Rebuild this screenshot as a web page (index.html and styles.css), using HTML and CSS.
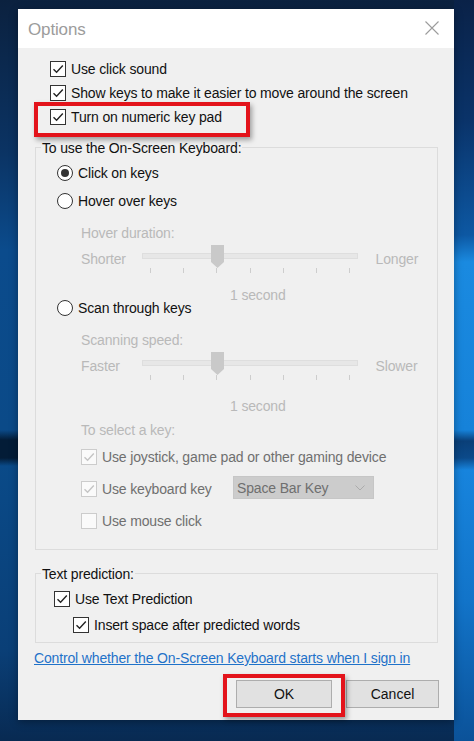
FILE: index.html
```html
<!DOCTYPE html>
<html lang="en">
<head>
    <meta charset="UTF-8">
    <meta name="viewport" content="width=device-width, initial-scale=1.0">
    <title>Options</title>
    <link rel="stylesheet" href="styles.css">
</head>
<body>

    <div class="dialog">
        <div class="titlebar">
            <span class="title">Options</span>
            <svg class="close" width="14" height="14" viewBox="0 0 14 14"><path d="M0.5 0.5L13.5 13.5M13.5 0.5L0.5 13.5" stroke="#9c9c9c" stroke-width="1.1" fill="none"/></svg>
        </div>

        <!-- General options -->
        <div class="general">
            <div class="check-row">
                <span class="box"><svg width="14" height="14" viewBox="0 0 14 14"><path d="M2.5 7.2L5.6 10.3L11.8 3.6" stroke="#222" stroke-width="1.4" fill="none"/></svg></span>
                Use click sound
            </div>
            <div class="check-row">
                <span class="box"><svg width="14" height="14" viewBox="0 0 14 14"><path d="M2.5 7.2L5.6 10.3L11.8 3.6" stroke="#222" stroke-width="1.4" fill="none"/></svg></span>
                Show keys to make it easier to move around the screen
            </div>
            <div class="check-row highlighted">
                <span class="box"><svg width="14" height="14" viewBox="0 0 14 14"><path d="M2.5 7.2L5.6 10.3L11.8 3.6" stroke="#222" stroke-width="1.4" fill="none"/></svg></span>
                Turn on numeric key pad
            </div>
        </div>

        <!-- On-Screen Keyboard mode -->
        <div class="group keyboard-group">
            <div class="group-title">To use the On-Screen Keyboard:</div>
            <div class="radio-row"><span class="radio on"></span>Click on keys</div>
            <div class="radio-row"><span class="radio"></span>Hover over keys</div>
            <div class="sub">
                <div class="sub-label">Hover duration:</div>
                <div class="slider-row">
                    <span class="slider-end">Shorter</span>
                    <div class="slider">
                        <div class="track"></div>
                        <svg class="thumb" width="13" height="23" viewBox="0 0 13 23"><polygon points="0,0 13,0 13,17 6.5,23 0,17" fill="#c9c9c9"/></svg>
                        <div class="ticks"><i></i><i></i><i></i><i></i><i></i><i></i><i></i></div>
                    </div>
                    <span class="slider-end right">Longer</span>
                </div>
                <div class="value">1 second</div>
            </div>
            <div class="radio-row"><span class="radio"></span>Scan through keys</div>
            <div class="sub">
                <div class="sub-label">Scanning speed:</div>
                <div class="slider-row">
                    <span class="slider-end">Faster</span>
                    <div class="slider">
                        <div class="track"></div>
                        <svg class="thumb" width="13" height="23" viewBox="0 0 13 23"><polygon points="0,0 13,0 13,17 6.5,23 0,17" fill="#c9c9c9"/></svg>
                        <div class="ticks"><i></i><i></i><i></i><i></i><i></i><i></i><i></i></div>
                    </div>
                    <span class="slider-end right">Slower</span>
                </div>
                <div class="value low">1 second</div>
                <div class="select-label">To select a key:</div>
                <div class="check-row disabled">
                    <span class="box"><svg width="14" height="14" viewBox="0 0 14 14"><path d="M2.5 7.2L5.6 10.3L11.8 3.6" stroke="#c4c4c4" stroke-width="1.4" fill="none"/></svg></span>
                    Use joystick, game pad or other gaming device
                </div>
                <div class="check-row disabled">
                    <span class="box"><svg width="14" height="14" viewBox="0 0 14 14"><path d="M2.5 7.2L5.6 10.3L11.8 3.6" stroke="#c4c4c4" stroke-width="1.4" fill="none"/></svg></span>
                    <span class="key-label">Use keyboard key</span>
                    <div class="dropdown">
                        Space Bar Key
                        <svg width="10" height="6" viewBox="0 0 10 6"><path d="M0.5 0.5L5 5L9.5 0.5" stroke="#ababab" fill="none"/></svg>
                    </div>
                </div>
                <div class="check-row disabled">
                    <span class="box"></span>
                    Use mouse click
                </div>
            </div>
        </div>

        <!-- Text prediction -->
        <div class="group prediction-group">
            <div class="group-title">Text prediction:</div>
            <div class="check-row pred">
                <span class="box"><svg width="14" height="14" viewBox="0 0 14 14"><path d="M2.5 7.2L5.6 10.3L11.8 3.6" stroke="#222" stroke-width="1.4" fill="none"/></svg></span>
                Use Text Prediction
            </div>
            <div class="check-row pred nested">
                <span class="box"><svg width="14" height="14" viewBox="0 0 14 14"><path d="M2.5 7.2L5.6 10.3L11.8 3.6" stroke="#222" stroke-width="1.4" fill="none"/></svg></span>
                Insert space after predicted words
            </div>
        </div>

        <a class="signin-link" href="#">Control whether the On-Screen Keyboard starts when I sign in</a>

        <div class="buttons">
            <div class="ok-wrap">
                <button class="btn ok">OK</button>
            </div>
            <button class="btn cancel">Cancel</button>
        </div>
    </div>

</body>
</html>
```

FILE: styles.css
```css
body {
    margin: 0;
    padding: 9px 0 0 18px;
    height: 741px;
    box-sizing: border-box;
    overflow: hidden;
    font-family: "Liberation Sans", Arial, sans-serif;
    font-size: 14px;
    letter-spacing: -0.15px;
    color: #111;
    background:
        linear-gradient(180deg, #0a2248 0px, #0a3369 120px, #0d58a3 235px, #1a8ae0 262px, #1682d9 430px, #0a3f78 441px, #0b4a8a 458px, #1784dd 470px, #1274c9 600px, #0b5299 741px) right top / 20px 100% no-repeat,
        linear-gradient(180deg, #0b213f 0px, #0b3363 150px, #0b4b8c 250px, #0b4a88 430px, #031c37 440px, #031c37 458px, #0a4a88 466px, #0a3f77 650px, #082a52 741px) left top / 100% 100% no-repeat;
}

.dialog {
    width: 436px;
    height: 711px;
    box-sizing: border-box;
    background-color: #f0f0f0;
    box-shadow: 0 2px 8px rgba(0, 0, 0, 0.35);
}

/* Title bar */
.titlebar {
    height: 39px;
    background-color: #fff;
    display: flex;
    align-items: center;
    justify-content: space-between;
    padding: 0 15px 0 10px;
}
.title {
    font-size: 17px;
    color: #9c9c9c;
    margin-top: 2px;
}
.close {
    margin-top: -2px;
}

/* Checkboxes */
.check-row {
    display: flex;
    align-items: center;
    height: 24px;
    white-space: nowrap;
}
.box {
    width: 16px;
    height: 16px;
    box-sizing: border-box;
    border: 1px solid #333;
    background-color: #fff;
    margin-right: 5px;
    display: flex;
    align-items: center;
    justify-content: center;
    flex-shrink: 0;
}

.general {
    padding: 9px 0 0 32px;
}
.highlighted {
    position: relative;
}
.highlighted::after {
    content: "";
    position: absolute;
    left: -16px;
    top: -3px;
    width: 216px;
    height: 35px;
    box-sizing: border-box;
    border: 4px solid #e3131b;
    box-shadow: 2px 3px 5px rgba(0, 0, 0, 0.35);
}

/* Group boxes */
.group {
    border: 1px solid #dcdcdc;
    margin: 0 16px 0 17px;
}
.group-title {
    margin-top: -9px;
    height: 18px;
    line-height: 18px;
    width: fit-content;
    padding: 0 1px;
    background-color: #f0f0f0;
}

.keyboard-group {
    margin-top: 18px;
    padding: 0 0 12px 21px;
}
.keyboard-group .group-title {
    margin-left: -16px;
    margin-bottom: 2px;
}

/* Radio buttons */
.radio-row {
    display: flex;
    align-items: center;
    height: 28px;
}
.radio {
    width: 16px;
    height: 16px;
    box-sizing: border-box;
    border: 1px solid #333;
    border-radius: 50%;
    background-color: #fff;
    margin-right: 5px;
    display: flex;
    align-items: center;
    justify-content: center;
}
.radio.on::before {
    content: "";
    width: 8px;
    height: 8px;
    border-radius: 50%;
    background-color: #333;
}

/* Disabled sub options */
.sub {
    padding-left: 24px;
    color: #b9b9b9;
}
.sub-label {
    margin-top: 8px;
    height: 20px;
    line-height: 20px;
}
.slider-row {
    margin-top: 2px;
    height: 28px;
    display: flex;
    align-items: center;
}
.slider-end {
    width: 62px;
}
.slider-end.right {
    margin-left: 18px;
}
.slider {
    width: 217px;
    height: 28px;
    position: relative;
}
.track {
    margin-top: 8px;
    height: 6px;
    box-sizing: border-box;
    border: 1px solid #dedede;
    background-color: #e7e7e7;
}
.thumb {
    position: absolute;
    left: 69px;
    top: 0;
}
.ticks {
    margin-top: 9px;
    height: 5px;
    padding: 0 8px;
    display: flex;
    justify-content: space-between;
}
.ticks i {
    width: 1px;
    background-color: #cdcdcd;
}
.value {
    margin-top: 14px;
    height: 7px;
    line-height: 16px;
    padding-left: 149px;
}
.value.low {
    margin-top: 18px;
}
.select-label {
    margin-top: 15px;
    height: 20px;
    line-height: 20px;
}

.check-row.disabled {
    height: 32px;
    color: #6f6f6f;
}
.select-label + .check-row {
    margin-top: 1px;
}
.check-row.disabled .box {
    border-color: #cccccc;
    background-color: #fafafa;
}
.key-label {
    width: 131px;
}
.dropdown {
    width: 141px;
    height: 23px;
    box-sizing: border-box;
    background-color: #cccccc;
    border: 1px solid #c6c6c6;
    display: flex;
    align-items: center;
    justify-content: space-between;
    padding: 0 8px 0 3px;
    color: #6f6f6f;
    margin-top: -3px;
}

/* Text prediction */
.prediction-group {
    margin-top: 23px;
    padding: 0 0 4px 18px;
}
.prediction-group .group-title {
    margin-left: -13px;
    margin-bottom: 3px;
}
.check-row.pred {
    height: 26px;
}
.check-row.nested {
    margin-left: 19px;
}

.signin-link {
    display: block;
    margin: 5px 0 0 16px;
    height: 20px;
    line-height: 20px;
    color: #1f72c9;
    text-decoration: underline;
}

/* Buttons */
.buttons {
    margin-top: 12px;
    padding-right: 15px;
    display: flex;
    justify-content: flex-end;
    gap: 14px;
}
.btn {
    height: 28px;
    font-family: inherit;
    font-size: 14px;
    color: #111;
    background-color: #e1e1e1;
    border: 1px solid #adadad;
    padding: 0;
}
.ok {
    width: 96px;
}
.cancel {
    width: 93px;
}
.ok-wrap {
    position: relative;
    display: flex;
}
.ok-wrap::after {
    content: "";
    position: absolute;
    left: -13px;
    top: -6px;
    width: 122px;
    height: 43px;
    box-sizing: border-box;
    border: 4px solid #e3131b;
    box-shadow: 2px 3px 5px rgba(0, 0, 0, 0.35);
}
```
